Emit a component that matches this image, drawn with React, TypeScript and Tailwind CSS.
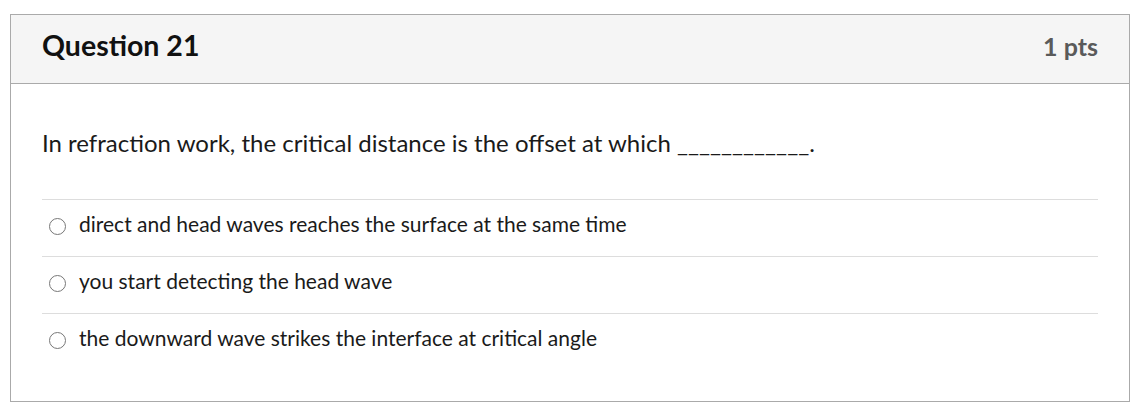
export default function App() {
  const options = [
    'direct and head waves reaches the surface at the same time',
    'you start detecting the head wave',
    'the downward wave strikes the interface at critical angle',
  ];

  return (
    <div className="bg-white w-[1140px] h-[417px] pt-[14px] pl-[10px]" style={{ fontFamily: 'Lato, "Noto Sans", sans-serif' }}>
      <div className="w-[1120px] h-[388px] border border-[#aaaaaa] flex flex-col">
        <div className="h-[69px] bg-[#f5f5f5] border-b border-[#aaaaaa] flex items-baseline justify-between px-[31px] pt-[16px]">
          <h2 className="text-[28.5px] font-bold text-[#111111] leading-[29px]">Question 21</h2>
          <span className="text-[25px] font-bold text-[#5a5a5a] leading-[29px]">1 pts</span>
        </div>
        <div className="px-[31px] pt-[45px]">
          <p className="text-[24px] text-[#1a1a1a] leading-[28px] mb-[42px]">
            In refraction work, the critical distance is the offset at which ____________.
          </p>
          <div>
            {options.map((o) => (
              <label key={o} className="flex items-start h-[57px] border-t border-[#dddddd] gap-[13px] pl-[7px] pt-[11px]">
                <span className="mt-[7px] w-[17px] h-[17px] shrink-0 rounded-full border-[1.5px] border-[#777777] bg-white" />
                <span className="text-[21px] text-[#1a1a1a] leading-[25px]">{o}</span>
              </label>
            ))}
          </div>
        </div>
      </div>
    </div>
  );
}
